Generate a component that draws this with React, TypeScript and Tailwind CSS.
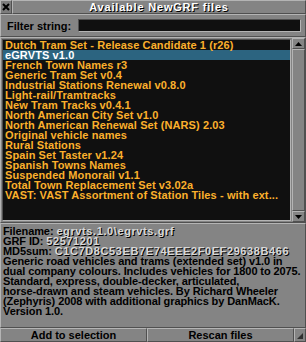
import React from "react"

const grfs = [
  "Dutch Tram Set - Release Candidate 1 (r26)",
  "eGRVTS v1.0",
  "French Town Names r3",
  "Generic Tram Set v0.4",
  "Industrial Stations Renewal v0.8.0",
  "Light-rail/Tramtracks",
  "New Tram Tracks v0.4.1",
  "North American City Set v1.0",
  "North American Renewal Set (NARS) 2.03",
  "Original vehicle names",
  "Rural Stations",
  "Spain Set Taster v1.24",
  "Spanish Towns Names",
  "Suspended Monorail v1.1",
  "Total Town Replacement Set v3.02a",
  "VAST: VAST Assortment of Station Tiles - with ext...",
]

const description = [
  "Generic road vehicles and trams (extended set) v1.0 in",
  "dual company colours. Includes vehicles for 1800 to 2075.",
  "Standard, express, double-decker, articulated,",
  "horse-drawn and steam vehicles. By Richard Wheeler",
  "(Zephyris) 2008 with additional graphics by DanMacK.",
  "Version 1.0.",
]

const bevel = "border border-t-[#b4b4b4] border-l-[#b4b4b4] border-b-[#505050] border-r-[#505050]"
const shadow = { textShadow: "1px 1px 0 #000" }

export default function App() {
  return (
    <div
      className="w-[306px] h-[342px] bg-[#848484] flex flex-col overflow-hidden text-[11px] font-bold leading-[10px]"
      style={{ fontFamily: '"Liberation Sans", Arial, sans-serif' }}
    >
      {/* title bar */}
      <div className="flex h-[14px]">
        <div className={`w-[12px] flex items-center justify-center bg-[#7c7c7c] ${bevel}`}>
          <svg width="8" height="8" viewBox="0 0 8 8">
            <path d="M1 1 L7 7 M7 1 L1 7" stroke="#000" strokeWidth="2" />
          </svg>
        </div>
        <div className={`flex-1 flex items-center justify-center text-white tracking-[0.8px] ${bevel}`} style={shadow}>
          Available NewGRF files
        </div>
      </div>

      {/* filter */}
      <div className={`h-[23px] flex items-center pl-[6px] pr-[4px] gap-[7px] ${bevel}`}>
        <span className="text-black">Filter string:</span>
        <div className="flex-1 h-[13px] bg-[#101010] border border-t-[#505050] border-l-[#505050] border-b-[#b4b4b4] border-r-[#b4b4b4]" />
      </div>

      {/* list + scrollbar */}
      <div className={`flex h-[186px] ${bevel}`}>
        <div className="flex-1 m-[1px] bg-[#101010] border border-t-[#505050] border-l-[#505050] border-b-[#b4b4b4] border-r-[#b4b4b4] tracking-[0.1px]">
          {grfs.map((name, i) => (
            <div
              key={name}
              className={`h-[10px] pl-[2px] whitespace-nowrap ${i === 1 ? "bg-[#2c6480] text-white" : "text-[#fcb02c]"}`}
            >
              {name}
            </div>
          ))}
        </div>
        <div className="w-[13px] flex flex-col">
          <div className={`h-[11px] flex items-center justify-center ${bevel}`}>
            <svg width="7" height="4" viewBox="0 0 7 4">
              <path d="M3.5 0 L7 4 L0 4 Z" fill="#000" />
            </svg>
          </div>
          <div className={`flex-1 ${bevel}`} />
          <div className={`h-[11px] flex items-center justify-center ${bevel}`}>
            <svg width="7" height="4" viewBox="0 0 7 4">
              <path d="M0 0 L7 0 L3.5 4 Z" fill="#000" />
            </svg>
          </div>
        </div>
      </div>

      {/* details */}
      <div className={`flex-1 pl-[2px] pt-[2px] text-black tracking-[-0.1px] ${bevel}`}>
        <div className="h-[10px] whitespace-nowrap">
          Filename: <span className="text-[#d8d8d8] tracking-[0.6px]" style={shadow}>egrvts.1.0\egrvts.grf</span>
        </div>
        <div className="h-[10px] whitespace-nowrap">
          GRF ID: <span className="text-[#d8d8d8] tracking-[0.6px]" style={shadow}>52571201</span>
        </div>
        <div className="h-[10px] whitespace-nowrap">
          MD5sum: <span className="text-[#d8d8d8] tracking-[0.6px]" style={shadow}>C1C7D8C53EB7E74EEE2F0EF29638B466</span>
        </div>
        {description.map((line) => (
          <div key={line} className="h-[10px] whitespace-nowrap">
            {line}
          </div>
        ))}
      </div>

      {/* buttons */}
      <div className="flex h-[14px]">
        <div className={`w-[147px] flex items-center justify-center text-black ${bevel}`}>Add to selection</div>
        <div className={`flex-1 flex items-center justify-center text-black ${bevel}`}>Rescan files</div>
        <div className={`w-[12px] flex items-end justify-end p-[1px] ${bevel}`}>
          <svg width="8" height="8" viewBox="0 0 8 8">
            <path d="M7 1 L7 7 L1 7 Z" fill="#303030" />
          </svg>
        </div>
      </div>
    </div>
  )
}
